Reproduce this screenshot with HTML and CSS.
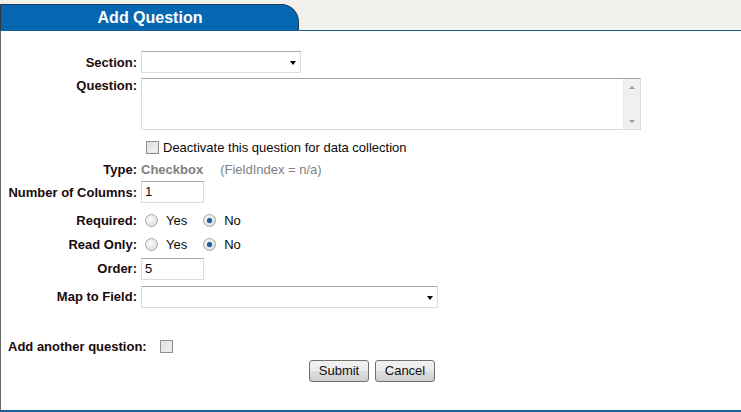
FILE: index.html
```html
<!DOCTYPE html>
<html>
<head>
<meta charset="utf-8">
<link rel="stylesheet" href="styles.css">
</head>
<body>
<div class="topbar">
  <div class="tab">Add Question</div>
</div>
<div class="panel">
  <div class="row r-section">
    <div class="label">Section:</div>
    <div class="select sel-small"></div>
  </div>
  <div class="row r-question">
    <div class="label">Question:</div>
    <div class="textarea">
      <div class="ta-body"></div>
      <div class="ta-scroll"><span class="up"></span><span class="down"></span></div>
    </div>
  </div>
  <div class="row r-deact">
    <div class="label"></div>
    <div class="field"><span class="check"></span><span class="text">Deactivate this question for data collection</span></div>
  </div>
  <div class="row r-type">
    <div class="label">Type:</div>
    <div class="field"><span class="typeval">Checkbox</span><span class="findex">(FieldIndex = n/a)</span></div>
  </div>
  <div class="row r-cols">
    <div class="label">Number of Columns:</div>
    <div class="input">1</div>
  </div>
  <div class="row r-req">
    <div class="label">Required:</div>
    <div class="field radios">
      <span class="radio"></span><span class="text">Yes</span>
      <span class="radio on"></span><span class="text">No</span>
    </div>
  </div>
  <div class="row r-ro">
    <div class="label">Read Only:</div>
    <div class="field radios">
      <span class="radio"></span><span class="text">Yes</span>
      <span class="radio on"></span><span class="text">No</span>
    </div>
  </div>
  <div class="row r-order">
    <div class="label">Order:</div>
    <div class="input">5</div>
  </div>
  <div class="row r-map">
    <div class="label">Map to Field:</div>
    <div class="select sel-wide"></div>
  </div>
  <div class="row r-another">
    <span class="another-label">Add another question:</span>
    <span class="check"></span>
  </div>
  <div class="buttons">
    <span class="btn btn-submit">Submit</span>
    <span class="btn btn-cancel">Cancel</span>
  </div>
</div>
</body>
</html>
```

FILE: styles.css
```css
html, body {
  margin: 0;
  padding: 0;
  background: #ffffff;
  font-family: "Liberation Sans", Arial, sans-serif;
  font-size: 13px;
  color: #0a0a0a;
}

.topbar {
  height: 30px;
  background: #f1f0eb;
  display: flex;
  align-items: flex-end;
  border-bottom: 1px solid #1d5f98;
}

.tab {
  width: 296px;
  height: 25px;
  background: #0566b2;
  border-top: 1px solid #1b3a5c;
  border-right: 1px solid #1b3a5c;
  border-left: 1px solid #333;
  border-top-right-radius: 18px;
  color: #ffffff;
  font-weight: bold;
  font-size: 16px;
  text-align: center;
  line-height: 26px;
  padding-left: 1px;
  box-sizing: content-box;
}

.panel {
  height: 379px;
  border-left: 1px solid #666;
  border-bottom: 2px solid #1d5f98;
  display: flex;
  flex-direction: column;
}

.row {
  display: flex;
  align-items: center;
}

.label {
  width: 129px;
  margin-left: 7px;
  margin-right: 4px;
  text-align: right;
  font-weight: bold;
  flex: none;
  white-space: nowrap;
  color: #1a0a0a;
}

.field {
  display: flex;
  align-items: center;
}

.r-section { margin-top: 20px; height: 22px; }
.r-question { margin-top: 5px; height: 52px; align-items: flex-start; }
.r-deact { margin-top: 8px; height: 18px; }
.r-type { margin-top: 4px; height: 18px; }
.r-cols { margin-top: 3px; height: 22px; }
.r-req { margin-top: 8px; height: 18px; }
.r-ro { margin-top: 6px; height: 18px; }
.r-order { margin-top: 5px; height: 21px; }
.r-map { margin-top: 7px; height: 21px; }
.r-another { margin-top: 30px; height: 18px; padding-left: 7px; }

.select {
  position: relative;
  height: 20px;
  border: 1px solid #dcdcdc;
  border-top-color: #a9a9a9;
  background: #fff;
}
.sel-small { width: 158px; }
.sel-wide { width: 295px; }
.select::after {
  content: "";
  position: absolute;
  right: 4px;
  top: 9px;
  border-left: 3.5px solid transparent;
  border-right: 3.5px solid transparent;
  border-top: 4px solid #000;
}

.textarea {
  width: 498px;
  height: 50px;
  border: 1px solid #dcdcdc;
  border-top-color: #a9a9a9;
  display: flex;
  background: #fff;
}
.ta-body { flex: 1; }
.ta-scroll {
  width: 16px;
  background: #f0f0f0;
  border-left: 1px solid #e6e6e6;
  display: flex;
  flex-direction: column;
  justify-content: space-between;
  align-items: center;
  padding: 7px 0 6px;
}
.ta-scroll .up {
  border-left: 3px solid transparent;
  border-right: 3px solid transparent;
  border-bottom: 3px solid #9a9a9a;
}
.ta-scroll .down {
  border-left: 3px solid transparent;
  border-right: 3px solid transparent;
  border-top: 3px solid #9a9a9a;
}

.check {
  display: inline-block;
  width: 11px;
  height: 11px;
  border: 1px solid #8e8f8f;
  background: linear-gradient(135deg, #dcdcdc, #f6f6f6);
  box-shadow: inset 0 0 0 1px #e8e8e8;
  flex: none;
}
.r-deact .check { margin-left: 5px; margin-right: 4px; }
.r-another .check { margin-left: 13px; }

.text { color: #0a0a0a; }

.typeval {
  color: #808080;
  font-weight: bold;
}
.findex {
  color: #808080;
  margin-left: 17px;
}

.input {
  width: 58px;
  height: 20px;
  border: 1px solid #dcdcdc;
  border-top-color: #a9a9a9;
  line-height: 20px;
  padding-left: 3px;
  font-size: 13px;
  background: #fff;
}

.radios .radio {
  display: inline-block;
  width: 11px;
  height: 11px;
  border-radius: 50%;
  border: 1px solid #a6a6a6;
  background: radial-gradient(circle at 40% 40%, #fbfbfb, #d8d8d8);
  flex: none;
  position: relative;
}
.radios .radio:first-child { margin-left: 4px; }
.radios .radio + .text { margin-left: 8px; }
.radios .text + .radio { margin-left: 16px; }
.radios .radio.on::after {
  content: "";
  position: absolute;
  left: 3px;
  top: 3px;
  width: 5px;
  height: 5px;
  border-radius: 50%;
  background: #1e5d9a;
  box-shadow: 0 0 1px #6aa0d0;
}

.another-label { font-weight: bold; color: #1a0a0a; }

.buttons {
  margin-top: 5px;
  display: flex;
  gap: 6px;
  padding-left: 308px;
}
.btn {
  display: inline-block;
  height: 20px;
  line-height: 20px;
  border: 1px solid #707070;
  border-radius: 3px;
  background: linear-gradient(#f2f2f2, #ebebeb 50%, #dddddd 51%, #cfcfcf);
  font-size: 13px;
  text-align: center;
  color: #111;
}
.btn-submit { width: 58px; }
.btn-cancel { width: 58px; }
```
